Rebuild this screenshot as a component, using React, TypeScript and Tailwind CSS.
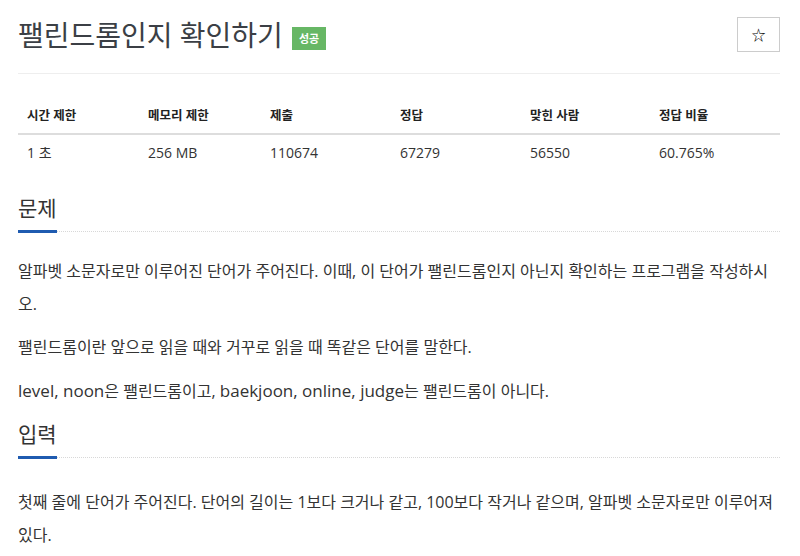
import React from "react";

const ff = { fontFamily: '"Open Sans", "Noto Sans CJK KR", sans-serif' };

function Heading({ text }: { text: string }) {
  return (
    <div className="flex items-end">
      <h2 className="border-b-[3px] border-[#1f5bb0] text-[21px] leading-[32px] text-[#333] pb-[6px] -mb-[1px]">
        {text}
      </h2>
      <div className="flex-1 border-b border-dotted border-[#d8d8d8]" />
    </div>
  );
}

function L({ children }: { children: React.ReactNode }) {
  return <span className="text-[17px]">{children}</span>;
}

export default function App() {
  const heads = ["시간 제한", "메모리 제한", "제출", "정답", "맞힌 사람", "정답 비율"];
  const vals = ["1 초", "256 MB", "110674", "67279", "56550", "60.765%"];
  const widths = ["w-[121px]", "w-[122px]", "w-[130px]", "w-[130px]", "w-[129px]", "w-[130px]"];
  return (
    <div className="w-[800px] h-[556px] overflow-hidden bg-white text-[#333]" style={ff}>
      <div className="ml-[18px] w-[762px] pt-[17px]">
        <div className="flex justify-between items-start h-[57px] border-b border-[#eee]">
          <div className="flex items-center">
            <h1 className="text-[28px] leading-[36px] text-[#3b3f45]">팰린드롬인지 확인하기</h1>
            <span className="ml-[9px] mt-[6px] h-[23px] px-[7px] bg-[#67b765] text-white text-[11px] font-bold leading-[23px]">
              성공
            </span>
          </div>
          <button className="w-[43px] h-[35px] border border-[#ccc] bg-white text-[14px] text-black flex items-center justify-center">
            ☆
          </button>
        </div>

        <div className="mt-[23px]">
          <div className="flex h-[38px] items-center pt-[2px] border-b-2 border-[#ddd] text-[12.5px] font-bold text-[#222]">
            {heads.map((h, i) => (
              <div key={i} className={`${widths[i]} pl-[9px]`}>{h}</div>
            ))}
          </div>
          <div className="flex h-[34px] items-center text-[14px]">
            {vals.map((v, i) => (
              <div key={i} className={`${widths[i]} pl-[9px]`}>{v}</div>
            ))}
          </div>
        </div>

        <div className="mt-[23px]">
          <Heading text="문제" />
          <div className="mt-[23px] text-[16px] leading-[33px] text-[#333]">
            <p className="mb-[10px]">
              알파벳 소문자로만 이루어진 단어가 주어진다. 이때, 이 단어가 팰린드롬인지 아닌지 확인하는 프로그램을 작성하시오.
            </p>
            <p className="mb-[10px]">팰린드롬이란 앞으로 읽을 때와 거꾸로 읽을 때 똑같은 단어를 말한다.</p>
            <p className="mb-[10px]">
              <L>level, noon</L>은 팰린드롬이고, <L>baekjoon, online, judge</L>는 팰린드롬이 아니다.
            </p>
          </div>
        </div>

        <div className="mt-[1px]">
          <Heading text="입력" />
          <div className="mt-[28px] text-[16px] leading-[33px] text-[#333]">
            <p className="mb-[10px]">
              첫째 줄에 단어가 주어진다. 단어의 길이는 1보다 크거나 같고, 100보다 작거나 같으며, 알파벳 소문자로만 이루어져 있다.
            </p>
          </div>
        </div>
      </div>
    </div>
  );
}
